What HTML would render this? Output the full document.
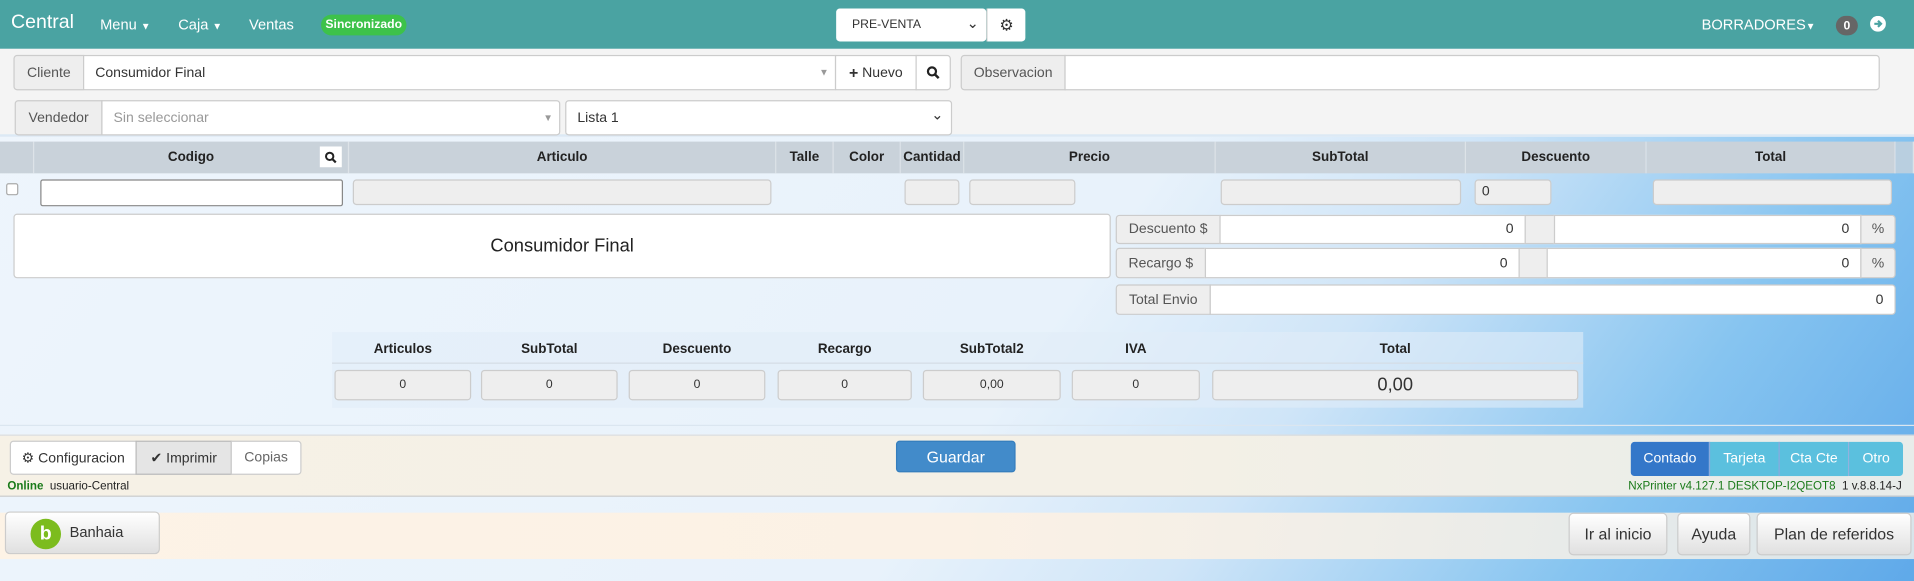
<!DOCTYPE html>
<html><head><meta charset="utf-8"><style>
*{box-sizing:border-box;margin:0;padding:0}
html,body{width:1914px;height:581px;overflow:hidden}
body{font-family:"Liberation Sans Narrow","Liberation Sans",sans-serif;color:#333;background:#eaf3fb}
#w{position:absolute;left:0;top:0;width:1568px;height:476px;transform:scale(1.22066);transform-origin:0 0;
background:linear-gradient(125deg,#eef5fc 0%,#e8f2fb 55%,#cfe5f8 68%,#86c4f0 85%,#5fa9e9 100%);font-size:11.5px;overflow:hidden;white-space:nowrap}
.a{position:absolute}
.nav{left:0;top:0;width:1568px;height:40px;background:#4aa3a2;color:#fff}
.box{border:1px solid #ccc;background:#fff;border-radius:3px}
.lbl{background:#eee;border:1px solid #ccc;color:#555;display:flex;align-items:center;justify-content:center}
.inp{background:#fff;border:1px solid #ccc;display:flex;align-items:center;padding:0 9px}
.ro{background:#eee;border:1px solid #ccc;border-radius:3px}
.th{top:116px;height:26px;background:#c9d2da;border-right:1px solid #dde3e8;font-weight:bold;font-size:11px;display:flex;align-items:center;justify-content:center;color:#222}
.c{display:flex;align-items:center;justify-content:center}
.btn{background:linear-gradient(#fff,#e0e0e0);border:1px solid #ccc;border-radius:4px;font-size:13px;color:#333}
.hd{font-weight:bold;font-size:11px;color:#222}
</style></head><body><div id="w">
<div class="a nav">
 <div class="a" style="left:9px;top:10px;font-size:16px">Central</div>
 <div class="a" style="left:82px;top:13px;font-size:12px">Menu <span style="font-size:8px">▼</span></div>
 <div class="a" style="left:146px;top:13px;font-size:12px">Caja <span style="font-size:8px">▼</span></div>
 <div class="a" style="left:204px;top:13px;font-size:12px">Ventas</div>
 <div class="a c" style="left:263px;top:12px;width:70px;height:17px;background:#3dc24a;border-radius:9px;font-size:10px;font-weight:bold">Sincronizado</div>
 <div class="a" style="left:685px;top:7px;width:123px;height:27px;background:#fff;border-radius:3px;color:#333;font-size:10px;padding:8px 13px">PRE-VENTA<span style="position:absolute;right:6px;top:5px;font-size:12px">⌄</span></div>
 <div class="a c" style="left:808px;top:7px;width:32px;height:27px;background:#fff;border-left:1px solid #ccc;border-radius:0 3px 3px 0;color:#333;font-size:13px">⚙</div>
 <div class="a" style="left:1394px;top:13px;font-size:12px">BORRADORES<span style="font-size:8px">▼</span></div>
 <div class="a c" style="left:1504px;top:13px;width:18px;height:16px;background:#666;border-radius:8px;font-size:10px;font-weight:bold">0</div>
 <svg class="a" style="left:1532px;top:13px" width="13" height="13" viewBox="0 0 13 13"><circle cx="6.5" cy="6.5" r="6.5" fill="#fff"/><path d="M3.5 6.5h5M6.5 4l2.5 2.5-2.5 2.5" stroke="#4aa3a2" stroke-width="1.8" fill="none"/></svg>
</div>
<div class="a" style="left:0;top:40px;width:1568px;height:72px;background:#f4f4f4;border-bottom:2px solid #dce9f5"></div>
<div class="a lbl" style="left:11px;top:45px;width:58px;height:29px;border-radius:3px 0 0 3px">Cliente</div>
<div class="a inp" style="left:68px;top:45px;width:617px;height:29px">Consumidor Final<span style="position:absolute;right:5px;color:#999;font-size:8px">▼</span></div>
<div class="a c" style="left:684px;top:45px;width:67px;height:29px;background:#fff;border:1px solid #ccc"><b style="font-size:13px">+</b>&nbsp;Nuevo</div>
<div class="a c" style="left:750px;top:45px;width:29px;height:29px;background:#fff;border:1px solid #ccc;border-radius:0 3px 3px 0"><svg width="11" height="11" viewBox="0 0 11 11"><circle cx="4.5" cy="4.5" r="3.3" stroke="#222" stroke-width="1.8" fill="none"/><path d="M7 7l3 3" stroke="#222" stroke-width="2"/></svg></div>
<div class="a lbl" style="left:787px;top:45px;width:86px;height:29px;border-radius:3px 0 0 3px">Observacion</div>
<div class="a inp" style="left:872px;top:45px;width:668px;height:29px;border-radius:0 3px 3px 0"></div>
<div class="a lbl" style="left:12px;top:82px;width:72px;height:29px;border-radius:3px 0 0 3px">Vendedor</div>
<div class="a inp" style="left:83px;top:82px;width:376px;height:29px;color:#999;border-radius:0 3px 3px 0">Sin seleccionar<span style="position:absolute;right:5px;font-size:8px">▼</span></div>
<div class="a inp" style="left:463px;top:82px;width:317px;height:29px;border-radius:3px">Lista 1<span style="position:absolute;right:6px;font-size:12px;top:4px">⌄</span></div>

<div class="a th" style="left:0;width:28px"></div>
<div class="a th" style="left:28px;width:258px">Codigo</div>
<div class="a c" style="left:262px;top:120px;width:18px;height:17px;background:#fff"><svg width="10" height="10" viewBox="0 0 11 11"><circle cx="4.5" cy="4.5" r="3.3" stroke="#222" stroke-width="1.8" fill="none"/><path d="M7 7l3 3" stroke="#222" stroke-width="2"/></svg></div>
<div class="a th" style="left:286px;width:350px">Articulo</div>
<div class="a th" style="left:636px;width:47px">Talle</div>
<div class="a th" style="left:683px;width:55px">Color</div>
<div class="a th" style="left:738px;width:52px">Cantidad</div>
<div class="a th" style="left:790px;width:206px">Precio</div>
<div class="a th" style="left:996px;width:205px">SubTotal</div>
<div class="a th" style="left:1201px;width:148px">Descuento</div>
<div class="a th" style="left:1349px;width:204px">Total</div>
<div class="a th" style="left:1553px;width:15px;background:#b9cfe0"></div>
<div class="a" style="left:5px;top:150px;width:10px;height:10px;border:1px solid #aaa;background:#fff;border-radius:2px"></div>
<div class="a" style="left:33px;top:147px;width:248px;height:22px;border:1px solid #888;background:#fff;border-radius:2px"></div>
<div class="a ro" style="left:289px;top:147px;width:343px;height:21px"></div>
<div class="a ro" style="left:741px;top:147px;width:45px;height:21px"></div>
<div class="a ro" style="left:794px;top:147px;width:87px;height:21px"></div>
<div class="a ro" style="left:1000px;top:147px;width:197px;height:21px"></div>
<div class="a ro" style="left:1208px;top:147px;width:63px;height:21px;padding:3px 5px">0</div>
<div class="a ro" style="left:1354px;top:147px;width:196px;height:21px"></div>

<div class="a c box" style="left:11px;top:175px;width:899px;height:53px;font-size:15px;color:#222">Consumidor Final</div>
<div class="a lbl" style="left:914px;top:176px;width:86px;height:24px;border-radius:3px 0 0 3px">Descuento $</div>
<div class="a inp" style="left:999px;top:176px;width:251px;height:24px;justify-content:flex-end">0</div>
<div class="a lbl" style="left:1249px;top:176px;width:25px;height:24px"></div>
<div class="a inp" style="left:1273px;top:176px;width:252px;height:24px;justify-content:flex-end">0</div>
<div class="a lbl" style="left:1524px;top:176px;width:29px;height:24px;border-radius:0 3px 3px 0">%</div>
<div class="a lbl" style="left:914px;top:203px;width:74px;height:25px;border-radius:3px 0 0 3px">Recargo $</div>
<div class="a inp" style="left:987px;top:203px;width:258px;height:25px;justify-content:flex-end">0</div>
<div class="a lbl" style="left:1244px;top:203px;width:24px;height:25px"></div>
<div class="a inp" style="left:1267px;top:203px;width:258px;height:25px;justify-content:flex-end">0</div>
<div class="a lbl" style="left:1524px;top:203px;width:29px;height:25px;border-radius:0 3px 3px 0">%</div>
<div class="a lbl" style="left:914px;top:233px;width:78px;height:25px;border-radius:3px 0 0 3px">Total Envio</div>
<div class="a inp" style="left:991px;top:233px;width:562px;height:25px;justify-content:flex-end;border-radius:0 3px 3px 0">0</div>

<div class="a" style="left:272px;top:272px;width:1025px;height:62px;background:rgba(225,237,248,.6)"></div>
<div class="a" style="left:272px;top:297px;width:1025px;height:1px;background:#d5dde5"></div>
<div class="a c hd" style="left:274px;top:278px;width:112px;height:16px">Articulos</div>
<div class="a c hd" style="left:394px;top:278px;width:112px;height:16px">SubTotal</div>
<div class="a c hd" style="left:515px;top:278px;width:112px;height:16px">Descuento</div>
<div class="a c hd" style="left:637px;top:278px;width:110px;height:16px">Recargo</div>
<div class="a c hd" style="left:756px;top:278px;width:113px;height:16px">SubTotal2</div>
<div class="a c hd" style="left:878px;top:278px;width:105px;height:16px">IVA</div>
<div class="a c hd" style="left:993px;top:278px;width:300px;height:16px">Total</div>
<div class="a ro c" style="left:274px;top:303px;width:112px;height:25px;font-size:10px">0</div>
<div class="a ro c" style="left:394px;top:303px;width:112px;height:25px;font-size:10px">0</div>
<div class="a ro c" style="left:515px;top:303px;width:112px;height:25px;font-size:10px">0</div>
<div class="a ro c" style="left:637px;top:303px;width:110px;height:25px;font-size:10px">0</div>
<div class="a ro c" style="left:756px;top:303px;width:113px;height:25px;font-size:10px">0,00</div>
<div class="a ro c" style="left:878px;top:303px;width:105px;height:25px;font-size:10px">0</div>
<div class="a ro c" style="left:993px;top:303px;width:300px;height:25px;font-size:15px">0,00</div>
<div class="a" style="left:0;top:348px;width:1568px;height:1px;background:#dbe6f0"></div>

<div class="a" style="left:0;top:356px;width:1568px;height:51px;background:linear-gradient(90deg,#f6f1e6,#f4f0e6 60%,#e8ecea);border-top:1px solid #ddd;border-bottom:1px solid #ccc"></div>
<div class="a c" style="left:8px;top:361px;width:104px;height:28px;background:#fff;border:1px solid #ccc;border-radius:3px 0 0 3px">⚙&nbsp;Configuracion</div>
<div class="a c" style="left:111px;top:361px;width:79px;height:28px;background:#e5e5e5;border:1px solid #bbb">✔&nbsp;Imprimir</div>
<div class="a c" style="left:189px;top:361px;width:58px;height:28px;background:#fff;border:1px solid #ccc;border-radius:0 3px 3px 0;color:#666">Copias</div>
<div class="a" style="left:6px;top:393px;font-size:9.5px;color:#222"><b style="color:#1a7a1a">Online</b>&nbsp; usuario-Central</div>
<div class="a c" style="left:734px;top:361px;width:98px;height:26px;background:#428bca;border:1px solid #357ebd;border-radius:3px;color:#fff;font-size:13px">Guardar</div>
<div class="a c" style="left:1336px;top:362px;width:64px;height:28px;background:#3477c9;color:#fff;border-radius:3px 0 0 3px">Contado</div>
<div class="a c" style="left:1400px;top:362px;width:57px;height:28px;background:#5bc0de;color:#fff;border-left:1px solid #8ad">Tarjeta</div>
<div class="a c" style="left:1457px;top:362px;width:57px;height:28px;background:#5bc0de;color:#fff;border-left:1px solid #8ad">Cta Cte</div>
<div class="a c" style="left:1514px;top:362px;width:45px;height:28px;background:#5bc0de;color:#fff;border-left:1px solid #8ad;border-radius:0 3px 3px 0">Otro</div>
<div class="a" style="right:10px;top:393px;font-size:9.5px;color:#222"><span style="color:#1a7a1a">NxPrinter v4.127.1 DESKTOP-I2QEOT8</span>&nbsp; 1 v.8.8.14-J</div>

<div class="a" style="left:0;top:420px;width:1568px;height:38px;background:linear-gradient(90deg,#fdf3e6,#fbf1e5 50%,rgba(230,235,235,.9))"></div>
<div class="a btn" style="left:4px;top:419px;width:127px;height:35px"></div>
<div class="a c" style="left:25px;top:425px;width:25px;height:25px;border-radius:50%;background:#7cbc1e;color:#fff;font-weight:bold;font-size:16px">b</div>
<div class="a" style="left:57px;top:429px;font-size:12px;color:#333">Banhaia</div>
<div class="a btn c" style="left:1285px;top:420px;width:81px;height:35px">Ir al inicio</div>
<div class="a btn c" style="left:1374px;top:420px;width:60px;height:35px">Ayuda</div>
<div class="a btn c" style="left:1439px;top:420px;width:127px;height:35px">Plan de referidos</div>
</div></body></html>
